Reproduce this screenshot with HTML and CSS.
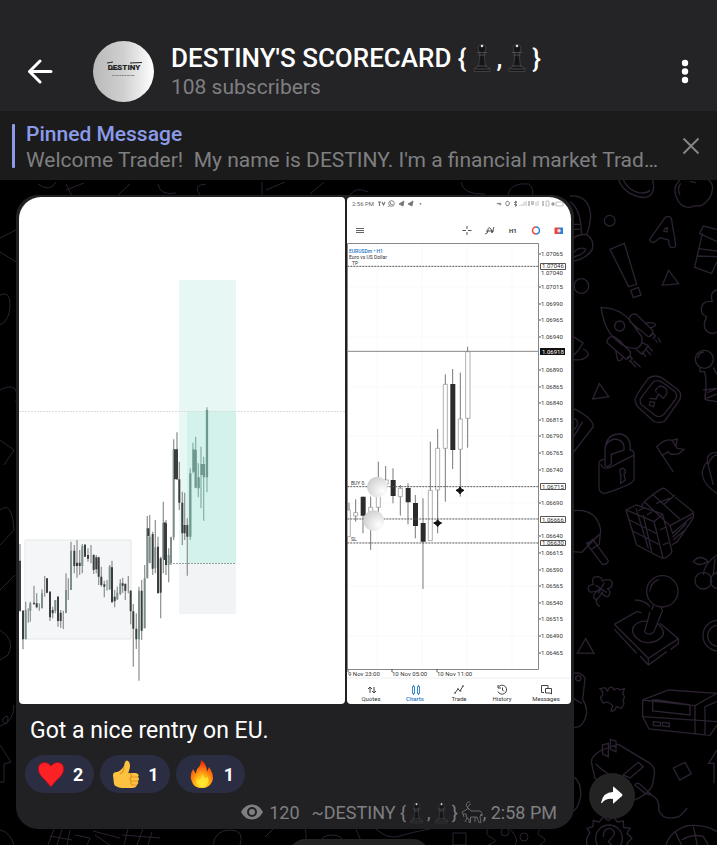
FILE: index.html
```html
<!DOCTYPE html>
<html lang="en">
<head>
    <meta charset="UTF-8">
    <meta name="viewport" content="width=device-width, initial-scale=1">
    <title>DESTINY'S SCORECARD</title>
    <link rel="stylesheet" href="styles.css">
</head>
<body>
<!-- shared icons -->
<svg class="defs" width="0" height="0" aria-hidden="true">
    <defs>
        <symbol id="pawn" viewBox="0 0 20 30">
            <path d="M7 9Q4.500 1.500 10 1.500T13 9L12 11L13.500 23L18 25.500V28.500H2V25.500L6.500 23L8 11Z" fill="#151516" stroke="#48484a" stroke-width=".8"/>
            <path d="M5 9.500H15M6.500 12H13.500M5.500 23H14.500M2.500 26H17.500" stroke="#59595b" stroke-width=".8"/>
            <circle cx="10" cy="3" r="1.300" fill="#ddd"/>
        </symbol>
        <linearGradient id="silver"><stop offset="0" stop-color="#b9b9b9"/><stop offset=".5" stop-color="#d0d0d0"/><stop offset="1" stop-color="#fff"/></linearGradient>
        <radialGradient id="ball" cx=".75" cy=".7" r=".8"><stop offset="0" stop-color="#fff"/><stop offset="1" stop-color="#cfcfcf"/></radialGradient>
        <radialGradient id="flame" cx=".5" cy=".85" r=".8"><stop offset="0" stop-color="#ffee35"/><stop offset=".4" stop-color="#ffb014"/><stop offset=".7" stop-color="#ff6a0d"/><stop offset="1" stop-color="#e52a08"/></radialGradient>
    </defs>
</svg>

<header class="topbar">
    <button class="icon-btn back" aria-label="Back">
        <svg width="26" height="26" viewBox="0 0 26 26" fill="none" stroke="#fff" stroke-width="3" stroke-linecap="round" stroke-linejoin="round"><path d="M24 12.500H2.500M13 2L2.500 12.500L13 23"/></svg>
    </button>
    <svg class="avatar" viewBox="0 0 61 61" role="img" aria-label="Channel photo">
        <circle cx="30.500" cy="30.500" r="30.500" fill="url(#silver)"/>
        <text x="31" y="29" text-anchor="middle" class="avatar-name">DESTINY</text>
        <path d="M14 22L20 21M16 28.500L26 28M37 22L49 21.500" stroke="#222" stroke-width="1"/>
        <path d="M19 34.500H42" stroke="#888" stroke-width="1" stroke-dasharray="2 .5"/>
    </svg>
    <div class="channel">
        <h1>DESTINY'S SCORECARD {<svg class="pawn"><use href="#pawn"/></svg>,<svg class="pawn"><use href="#pawn"/></svg>}</h1>
        <p>108 subscribers</p>
    </div>
    <button class="icon-btn menu" aria-label="Menu">
        <svg width="8" height="26" viewBox="0 0 8 26" fill="#fff"><circle cx="4" cy="4" r="3.200"/><circle cx="4" cy="12.500" r="3.200"/><circle cx="4" cy="21" r="3.200"/></svg>
    </button>
</header>

<section class="pinned">
    <span class="pinned-mark"></span>
    <a href="#post" class="pinned-link">
        <span class="pinned-title">Pinned Message</span>
        <span class="pinned-text">Welcome Trader!&nbsp; My name is DESTINY. I'm a financial market Trad…</span>
    </a>
    <button class="icon-btn" aria-label="Unpin">
        <svg width="18" height="18" viewBox="0 0 18 18" fill="none" stroke="#858585" stroke-width="2"><path d="M1.500 1.500L16.500 16.500M16.500 1.500L1.500 16.500"/></svg>
    </button>
</section>

<main class="chat">
    <!-- doodle wallpaper -->
    <svg class="wallpaper" viewBox="0 180 717 665" preserveAspectRatio="xMaxYMin slice" aria-hidden="true">
        <g transform="translate(570 180) scale(.3333)">
            <path d="M146 0Q155 25 180 40Q225 62 242 45Q256 30 248 0M160 0Q175 30 205 38Q230 42 240 30"/>
            <path d="M330 0Q308 20 318 48Q330 85 360 82Q375 75 392 78Q425 60 428 25Q428 8 415 0M330 45Q320 25 332 10M360 4L378 8"/>
            <circle cx="119" cy="122" r="16"/><circle cx="34" cy="318" r="22"/>
            <path d="M0 48Q60 45 62 110Q60 140 50 164Q75 180 66 210Q45 240 0 245M0 65Q35 90 34 165M0 133H30M0 148H30M50 164Q20 160 0 185M0 235Q50 220 46 207Q20 195 0 235"/>
            <path d="M286 112Q298 105 304 115L317 193Q317 204 304 203Q296 198 296 180L270 173L254 186Q240 190 239 178ZM281 153Q284 143 292 143L291 156Z"/>
            <path d="M120 208L163 190L200 313L176 320ZM182 331L205 322L213 345L190 353Z"/>
            <path d="M296 271L326 311L277 316Z"/>
            <path d="M441 148L400 138L389 160L441 185M397 160L374 262L425 280L441 245M384 206L441 213M380 228L441 230"/>
            <path d="M441 330Q418 335 427 365Q395 360 394 390Q395 405 410 410Q395 440 412 455Q430 466 441 455"/>
            <path d="M93 382Q155 385 184 427L215 470Q222 500 194 506Q155 505 120 460Q100 430 93 382Z"/><circle cx="149" cy="438" r="15"/>
            <path d="M178 415Q184 397 200 404L248 452Q250 470 235 470L180 425ZM111 482Q120 464 137 473L181 515Q184 535 168 538L111 488ZM137 512L143 540Q150 548 160 530M228 429Q250 425 257 434Q250 445 240 442M215 487L235 497L216 523L198 508M238 469L249 459L256 468L249 477M170 532L181 529L187 537L177 545M148 480L162 496M189 432L205 449M255 479L264 488M264 474L273 487M216 514L228 531M225 506L243 525M235 500L248 514M181 543L198 562M190 542L212 562"/>
            <path d="M10 470L39 489L27 508M39 507Q55 515 55 525Q38 545 10 538M27 508L10 528"/>
            <circle cx="403" cy="538" r="27"/><path d="M384 535Q385 518 402 516M390 562V575L403 575Q412 595 405 660M430 563L441 583M412 638L441 625M410 655L441 642"/>
            <path d="M88 611L116 650L68 657Z"/>
        </g>
        <g transform="translate(570 390) scale(.3333)">
            <path d="M195 30Q194 20 235 -35Q255 -48 275 -37L325 0Q340 15 325 35L285 92Q270 103 250 93L205 52Q197 45 195 30ZM210 28L250 -25Q263 -32 277 -23L315 5Q325 15 315 30L282 73Q270 85 255 76L212 42ZM238 25L258 27L265 12L280 25L291 10Q293 -10 270 -12Q250 0 260 8M240 35L254 37L250 50L238 46Z"/>
            <path d="M10 55Q70 85 70 110L10 187M10 85Q28 90 20 110L10 120M10 142L38 95"/>
            <path d="M87 222Q85 210 105 208V180Q108 130 152 132Q185 140 180 180Q194 180 192 200V270Q185 285 105 310Q86 310 87 290ZM105 225V175Q110 150 135 147Q165 150 162 180L124 193V222Q110 235 105 225ZM92 223Q100 240 120 232L190 196M150 245Q148 234 160 235Q172 245 162 252L166 270L152 280L153 256Q149 250 150 245Z"/>
            <path d="M260 170L310 246M260 170Q285 145 306 151L322 175L342 178L325 192L303 193L294 185L277 197ZM306 151L322 147L317 171"/>
            <path d="M168 360L198 345L278 372L306 485Q290 510 275 504L200 465ZM168 360L252 395L278 372M252 395L279 504M179 390L262 432M188 423L270 465M198 355L235 475M220 375L245 485M205 362L220 355M231 375L246 365M215 350Q215 335 275 296Q285 292 292 302L369 365Q374 378 366 390L322 455L305 465M223 335L300 407L369 370M250 315L330 388M280 345L315 315M258 340L300 325M300 407L308 430L365 380M308 442L350 400M310 450L345 420M270 420L290 410M278 465L296 458"/>
            <path d="M10 362Q80 355 92 420Q90 440 88 462L62 480M10 485L35 487L92 430M52 464L68 448L115 512Q112 525 97 523ZM48 460Q70 455 83 437"/>
            <path d="M91 597Q58 614 56 600Q50 585 70 583Q62 560 82 560Q95 560 97 573Q120 563 127 577Q128 593 113 596Q127 608 113 620Q100 620 96 607Q82 635 72 625Q65 612 91 597ZM76 585L110 608M103 578L85 610M81 627Q74 638 89 650"/>
            <circle cx="277" cy="604" r="47"/><path d="M240 604Q240 578 267 568M250 645L245 660M275 651V660"/>
            <circle cx="400" cy="572" r="25"/><circle cx="445" cy="572" r="24"/><path d="M400 555Q402 520 441 495M430 552L435 505M415 515Q390 490 370 515Q390 532 412 515"/>
            <path d="M441 188Q410 185 412 215Q395 235 397 255Q402 285 441 310M412 215L430 285M414 225Q425 195 441 195M400 0L441 -5M405 10L408 30L441 35"/>
        </g>
        <g transform="translate(570 610) scale(.3333)">
            <path d="M133 43L200 5L215 8M270 40L325 86V102L302 118M290 125L235 165L210 138M200 130L133 58ZM133 43L235 145L325 86M235 145V165M262 40Q290 65 275 82Q250 105 215 95Q180 75 190 50Q210 28 235 35M240 5L224 65Q235 80 252 65L278 0M240 -10Q225 -30 195 -30"/>
            <path d="M47 86L72 130L22 129Z"/><circle cx="445" cy="77" r="46"/><circle cx="445" cy="77" r="32"/>
            <path d="M10 190Q35 185 45 205L38 270Q50 285 50 310Q40 355 10 352M10 265L35 280"/><circle cx="25" cy="205" r="8"/>
            <path d="M90 236L105 233L113 243Q117 229 127 232L133 240Q143 230 149 240L163 236L158 253Q168 260 159 270L162 282L154 295L139 290Q133 307 123 303L128 287Q113 270 100 280L91 264Q107 250 90 236Z"/>
            <path d="M218 270L296 240L441 250M218 270V320L237 357L420 376L441 345M218 320L441 335M218 270L375 287L441 250M375 287V370M248 270L360 285V315L248 303ZM248 270L263 270L360 285M405 375V290L441 275M250 335L271 337V348L250 346ZM277 337L298 339V350L277 348Z"/>
            <path d="M65 460Q60 440 95 420L145 403L240 460Q260 475 250 510Q250 550 180 575Q150 565 75 505ZM77 462Q115 500 145 500Q200 555 185 560M97 405L115 400V440L98 432ZM121 388L138 393V425L121 418ZM159 495L205 457L220 470L180 504ZM195 525Q200 515 210 523L245 555L225 550ZM242 555Q270 565 266 600Q280 635 325 620Q330 620 352 594"/>
            <path d="M310 474L345 457L364 491L329 510ZM441 420L416 460H432V520"/>
            <path d="M50 685L60 668L51 655L69 650L70 632L88 636L100 620L115 632L130 620L142 636L160 633L161 652L180 655L171 670L186 685L171 700L178 715H50Z"/><circle cx="117" cy="685" r="40"/><path d="M100 680Q100 655 120 655Q142 665 128 680L115 695L125 705"/>
            <path d="M288 705Q300 665 350 648Q400 640 441 665M315 665L335 705M370 650L382 705M335 690Q370 670 400 680L415 705"/>
            <path d="M10 500Q35 515 32 560Q25 600 0 610"/>
        </g>
        <!-- strips around the bubble -->
        <path d="M38 184Q50 193 56 182M66 184L72 196M66 190L84 183M118 195L130 184M158 184Q160 196 176 193M200 195Q192 185 206 184M262 182V195M266 190L285 182M310 194L324 182M350 195Q356 186 368 192M461 182Q463 195 485 194M508 195Q510 182 529 184Q535 190 532 196"/>
        <path d="M0 238L16 230M0 252L16 262M0 295Q10 290 10 305T0 325M0 390Q20 380 16 402M0 440L14 450L4 465M0 510Q12 500 14 530L0 545M0 590L15 575M0 630Q16 640 8 655L0 660M0 726Q14 722 14 705M2 720Q9 712 8 720T2 720M0 745L11 762L4 764V782L0 782M0 830Q10 832 14 845"/>
        <path d="M54 829L48 845M62 829L57 845M70 830L67 845M50 836L72 840M75 835L90 838L87 845M93 831L120 838M95 835L110 845M128 829L124 845M143 829L137 845M152 832L148 845M122 835L160 838M213 845Q215 830 230 830T240 845M265 837L273 829M305 829Q308 838 303 845M356 829Q360 839 363 845M320 845Q320 835 332 835T344 845M376 829Q388 840 400 836T430 829M453 833H466V845H453ZM488 829Q484 835 492 838T488 845M510 829Q520 840 515 845M540 829Q535 834 542 837T540 845"/><circle cx="505" cy="832" r="4"/><circle cx="524" cy="837" r="4"/>
    </svg>

    <div class="row" id="post">
        <article class="bubble">
            <div class="album">
                <svg class="photo" viewBox="0 0 326 507" preserveAspectRatio="none" role="img" aria-label="EURUSD long position chart">
                    <rect width="326" height="507" fill="#fff"/>
                    <rect x="160" y="83" width="57" height="283" fill="#e6f7f4"/>
                    <rect x="168" y="214" width="49" height="152" fill="#d4f2ec"/>
                    <rect x="160" y="366" width="57" height="51" fill="#f2f3f5"/>
                    <path d="M6 343H112V442H6Z" fill="#f5f6f8" stroke="#e3e8e7"/>
                    <path d="M0 214.500H326" stroke="#dadedd" stroke-dasharray="2 1"/>
                    <path d="M154 366.500H217" stroke="#97a5a1" stroke-dasharray="2 1"/>
                    <g transform="translate(-4 243) scale(.3333)" fill="none">
                        <path stroke="#969998" stroke-width="4" d="M15 312V515M24 510V628M32 485V598M40 505V548M46 485V545M57 437V495M65 460V505M73 490V512M81 448V505M89 408V470M96 415V460M105 453V543M113 500V535M121 480V520M129 468V560M137 510V563M145 512V567M153 400V520M160 415V480M168 305V450M178 315V400M186 300V413M194 330V405M202 312V400M210 312V350M219 325V365M228 315V370M236 343V402M244 345V400M251 350V435M259 380V440M268 422V472M276 420V452M284 375V450M291 362V490M299 450V502M307 440V480M316 418V465M323 413V458M331 430V480M340 408V460M347 450V553M355 492V680M364 520V627M372 440V722M380 420V600M389 375V565M397 228V415M404 225V370M413 275V405M421 240V400M429 290V460M437 350V535M445 185V400M453 240V405M461 325V427M468 290V375M476 -2V300M486 -23V120M493 65V210M502 155V315M509 158V300M517 235V407"/>
                        <path stroke="#7c8f8b" stroke-width="6" d="M32 510V598M46 490V512M81 460V505M121 480V512M153 450V518M168 332V450M202 318V378M284 380V448M307 458V478M316 430V462M372 452V598M389 415V565M397 265V415M404 290V368M421 322V385M445 250V355M461 345V375M468 292V370M476 28V292"/>
                        <path stroke="#3a3e3e" stroke-width="6" d="M15 362V512M24 512V598M57 488V492M65 490V502M96 415V458M105 455V532M113 510V520M129 470V543M137 518V543M178 332V378M186 368V378M194 368V378M210 314V350M219 345V356M236 345V390M244 352V388M251 352V410M259 410V435M268 433V440M291 382V486M299 470V484M323 430V437M331 432V452M347 452V514M355 514V566M364 566V598M380 452V572M400 265V288M413 282V386M429 320V460M437 355V458M449 247V360M453 250V375M480 28V118M486 28V118M493 118V188M502 188V280M509 255V280M517 255V290"/>
                        <path stroke="#8bb5ab" stroke-width="4" d="M526 85V300M534 8V100M542 -10V145M550 70V172M558 20V205M566 50V242M576 -98V157"/>
                        <path stroke="#6f998f" stroke-width="7" d="M526 100V290M536 28V95M542 30V143M551 112V145M560 72V105M567 72V112M576 -90V112"/>
                    </g>
                </svg>
                <svg class="photo photo-mt" viewBox="0 0 224 507" preserveAspectRatio="none" role="img" aria-label="EURUSDm H1 terminal chart">
                    <rect width="224" height="507" fill="#fff"/>
                    <text x="5" y="9" class="t6 grey">2:56 PM</text>
                    <g fill="none" stroke="#777" stroke-width=".9">
                        <path d="M31 5H34M32.500 5V9M35 5L36.500 8L38 5" stroke-width="1.200"/>
                        <circle cx="44.500" cy="6.500" r="2.800"/><path d="M43 5Q43 8 46 8M42 9L41.500 10"/>
                        <path d="M52 7L57 4L56 9ZM61 7L66 4L65 9Z" fill="#777"/><path d="M73.500 6V7.500" stroke-width="1.500"/>
                        <path d="M150 7Q150 5 152 7T154 7T151 7M160 4Q157 6 160 9L162 8M160 4Q164 5 162 8M167 5L170 8L168.500 9.500V4L170 5L167 8M182 4V9M184 5H187M184 7H187M196 4V9M204 7H208M206 5V9"/>
                        <path d="M173 9V8M175 9V7M177 9V5M179 9V4M189 9V5M191 9V4M199 4H202V9H199ZM209 5H216V9H209Z" stroke="#bbb"/>
                    </g>
                    <path d="M9 31.500H17M9 33.500H17M9 35.500H17" stroke="#666"/>
                    <path d="M120 29V32M120 35V38M115.500 33.500H119M121 33.500H124.500M138 37Q141 37 141 33T144 32L145 36L147 30M139 34H147" stroke="#555" fill="none"/>
                    <text x="162" y="36" class="t6 bold">H1</text>
                    <path d="M189 30A3.500 3.500 0 0 0 189 37" stroke="#e5483d" stroke-width="1.500" fill="none"/><path d="M189 30A3.500 3.500 0 0 1 189 37" stroke="#2f80d8" stroke-width="1.500" fill="none"/>
                    <path d="M207.500 30.500H212V37H207.500Z" fill="#e5483d"/><path d="M212 30.500H216V37H212Z" fill="#2f80d8"/><circle cx="212" cy="33.700" r="1.800" fill="#ffd9d9"/>
                    <path d="M30 46V472M75 46V472M120 46V472M165 46V472M0 90H192M0 140H192M0 190H192M0 239H192M0 306H192M0 389H192M0 439H192" stroke="#f9f9f9"/>
                    <path d="M.5 472.500V46.500H191.500V472.500Z" fill="none" stroke="#888"/>
                    <text x="2" y="56" class="t5 blue">EURUSDm • H1</text>
                    <text x="2" y="62" class="t5">Euro vs US Dollar</text>
                    <text x="5" y="68" class="t5">TP</text>
                    <text x="4" y="288" class="t5">BUY 0.</text>
                    <text x="4" y="344" class="t5">SL</text>
                    <g transform="translate(-4 153) scale(.3333)">
                        <path stroke="#777" stroke-width="3" d="M18 458V480M38 448V515M60 440V550M83 440V600M106 335V510M128 348V400M150 355V460M172 405V497M195 400V523M217 435V565M240 445V717M262 275V421M284 237V550M307 73V455M329 57V357M352 68V440M374 -10V293"/>
                        <path fill="#fff" stroke="#888" stroke-width="2" d="M13 480H22V560H13ZM32 488H44V498H32ZM77 472H89V500H77ZM100 430H112V472H100ZM122 390H136V402H122ZM166 415H178V440H166ZM256 421H268V572H256ZM278 295H290V420H278ZM301 103H313V295H301ZM346 207H358V298H346ZM368 5H381V205H368Z"/>
                        <path fill="#2b2b2b" d="M53 440H68V497H53ZM143 390H158V438H143ZM188 414H203V457H188ZM210 459H225V528H210ZM233 519H248V575H233ZM322 102H337V300H322Z"/>
                        <path stroke="#555" stroke-width="3" stroke-dasharray="6 3" d="M13 410H587M13 507H587M13 -251H587M13 579H587"/>
                        <path stroke="#888" stroke-width="3" d="M13 4H587"/>
                        <circle cx="103" cy="411" r="31" fill="url(#ball)"/><circle cx="92" cy="512" r="31" fill="url(#ball)"/>
                        <path d="M351 411L355 417L363 421L355 426L351 432L347 426L339 421L347 417ZM284 509L288 515L296 519L288 524L284 530L280 524L272 519L280 515Z" fill="#111" stroke="#111" stroke-width="3"/>
                    </g>
                    <path d="M192 57H194M192 90H194M192 107H194M192 123H194M192 140H194M192 173H194M192 190H194M192 206H194M192 223H194M192 239H194M192 256H194M192 273H194M192 306H194M192 339H194M192 356H194M192 373H194M192 389H194M192 406H194M192 422H194M192 439H194M192 456H194M1 472V475M45 472V475M90 472V475" stroke="#555"/>
                    <g class="t6">
                        <text x="194" y="59">1.07065</text><text x="194" y="78">1.07040</text><text x="194" y="92">1.07015</text><text x="194" y="109">1.06990</text><text x="194" y="125">1.06965</text><text x="194" y="142">1.06940</text><text x="194" y="175">1.06890</text><text x="194" y="192">1.06865</text><text x="194" y="208">1.06840</text><text x="194" y="225">1.06815</text><text x="194" y="241">1.06790</text><text x="194" y="258">1.06765</text><text x="194" y="275">1.06740</text><text x="194" y="308">1.06690</text><text x="194" y="341">1.06640</text><text x="194" y="358">1.06615</text><text x="194" y="375">1.06590</text><text x="194" y="391">1.06565</text><text x="194" y="408">1.06540</text><text x="194" y="424">1.06515</text><text x="194" y="441">1.06490</text><text x="194" y="458">1.06465</text>
                        <path d="M193.500 66.500H218.500V72.500H193.500ZM193.500 286.500H218.500V292.500H193.500ZM193.500 319.500H218.500V325.500H193.500ZM193.500 343.500H218.500V348.500H193.500Z" fill="#fff" stroke="#555"/>
                        <path d="M193 151H218V158H193Z" fill="#111"/>
                        <text x="195" y="71">1.07046</text><text x="195" y="292">1.06715</text><text x="195" y="325">1.06666</text><text x="195" y="348">1.06630</text><text x="195" y="157" class="white">1.06918</text>
                        <text x="1" y="479">9 Nov 23:00</text><text x="45" y="479">10 Nov 05:00</text><text x="90" y="479">10 Nov 11:00</text>
                    </g>
                    <path d="M0 481H224" stroke="#eee"/>
                    <g fill="none" stroke="#444">
                        <path d="M23 496V490M21 492L23 490L25 492M27 490V496M25 494L27 496L29 494"/>
                        <path d="M65.500 489.500H67.500V496.500H65.500ZM70.500 489.500H72.500V496.500H70.500ZM66.500 488V489M66.500 497V498M71.500 488V489M71.500 497V498" stroke="#1d78c8" stroke-width=".9"/>
                        <path d="M108 496L111 492L113 494L116 489"/><path d="M108 495.500V496.500M111 491.500V492.500M113.500 493.500V494.500M116 488.500V489.500" stroke-width="2"/>
                        <path d="M151.500 490A4.500 4.500 0 1 1 151 494.500M151 488V491H154M155.500 490.500V493L157 494.500"/>
                        <path d="M201 491V488.500H194.500V495.500H197M198.500 491.500H204.500V497L203 496H198.500Z"/>
                    </g>
                    <g class="t6" text-anchor="middle">
                        <text x="24" y="504">Quotes</text><text x="68" y="504" class="blue">Charts</text><text x="112" y="504">Trade</text><text x="155" y="504">History</text><text x="199" y="504">Messages</text>
                    </g>
                </svg>
            </div>
            <p class="caption">Got a nice rentry on EU.</p>
            <div class="reactions">
                <button class="reaction" aria-label="Heart 2">
                    <svg width="28" height="28" viewBox="0 0 28 28"><path d="M14 27Q9 21 4 16Q-1 9 3 4Q9 0 14 6Q19 0 25 4Q29 9 24 16Q18 21 14 27Z" fill="#fb2225" stroke="#a8101e"/></svg>
                    <span>2</span>
                </button>
                <button class="reaction" aria-label="Thumbs up 1">
                    <svg width="28" height="28" viewBox="0 0 28 28"><path d="M1 15Q1 12 5 12Q9 11 12 6L13 2Q15-1 17 2Q19 5 17 11L16 13H24Q28 14 26 17Q28 19 26 21Q27 23 25 25Q24 28 20 28H10Q3 27 2 24Z" fill="#fdc23f"/><path d="M17 13Q20 14 19 17H26M19 17Q17 19 19 21H26M19 21Q18 23 20 25H25M12 7Q12 12 8 14" fill="none" stroke="#e49322" stroke-width="1.200"/></svg>
                    <span>1</span>
                </button>
                <button class="reaction" aria-label="Fire 1">
                    <svg width="28" height="28" viewBox="0 0 28 28"><path d="M13 0Q19 4 19 12L21 7Q27 16 24 22Q21 28 14 28Q6 28 4 22Q1 16 5 9L8 14Q8 9 11 7Q13 4 13 0Z" fill="url(#flame)"/><path d="M14 14Q16 18 18 18L20 17Q22 26 14 27Q7 26 9 18L11 20Q14 18 14 14Z" fill="#ffe62e" opacity=".8"/></svg>
                    <span>1</span>
                </button>
            </div>
            <footer class="meta">
                <svg width="22" height="16" viewBox="0 0 22 16"><path d="M0 8Q4 .5 11 .5T22 8Q18 15.500 11 15.500T0 8Z" fill="#7f7f81"/><circle cx="11" cy="8" r="5" fill="#212123"/><circle cx="11" cy="8" r="3" fill="#7f7f81"/></svg>
                <span class="views">120</span>
                <span>~DESTINY {<svg class="pawn"><use href="#pawn"/></svg>,<svg class="pawn"><use href="#pawn"/></svg>}<svg class="goat" viewBox="0 0 22 22"><path d="M5 9L1 11Q1 14 5 13L6 17L8 18V21.500H9.500V16H16L18 21.500H20L19 16L20 13L21 15V12L19 10H10L8 8Q3 4 7 1L9 1M5 9Q6 7 8 8M8 8Q5 5 10 3M6 17L4 21M14 16V21M2 13L3 16" fill="#1c1c1e" stroke="#707073" stroke-width=".9"/></svg>, 2:58 PM</span>
            </footer>
        </article>
        <button class="forward" aria-label="Forward">
            <svg width="22" height="20" viewBox="0 0 22 20"><path d="M0 17Q2 6 12 6V1Q12 0 13 1L21 8Q22 9 21 10L13 17Q12 18 12 17V13Q5 12 1 17Z" fill="#fff"/></svg>
        </button>
    </div>
    <div class="next-pill"></div>
</main>
</body>
</html>
```
FILE: styles.css
```css
:root {
    --bar: #242426;
    --pinned: #1b1b1b;
    --bubble: #212123;
    --muted: #7f7f81;
    --accent: #8b9bea;
}
* { box-sizing: border-box; }
body {
    margin: 0;
    height: 100vh;
    display: flex;
    flex-direction: column;
    overflow: hidden;
    font-family: Roboto, "Liberation Sans", sans-serif;
    background: #000;
    color: #fff;
}
h1, p { margin: 0; font-weight: 400; }
button {
    font-family: inherit;
    color: inherit;
    border: none;
    cursor: pointer;
}
.defs { position: absolute; }
.icon-btn {
    display: flex;
    padding: 0;
    background: none;
}

/* top bar */
.topbar {
    display: flex;
    align-items: center;
    height: 111px;
    padding: 32px 28px 0 27px;
    background: var(--bar);
    flex-shrink: 0;
}
.avatar {
    width: 61px;
    height: 61px;
    margin: 0 17px 0 40px;
    flex-shrink: 0;
}
.avatar-name {
    font-size: 8px;
    font-weight: 900;
    fill: #222;
}
.channel {
    flex: 1;
    min-width: 0;
    white-space: nowrap;
}
.channel h1 {
    font-size: 26px;
    line-height: 30px;
    font-weight: 500;
}
.channel p {
    font-size: 21px;
    line-height: 28px;
    color: var(--muted);
}
.channel .pawn {
    width: 20px;
    height: 30px;
    margin: 0 5px;
    vertical-align: -6px;
}

/* pinned message */
.pinned {
    display: flex;
    align-items: center;
    height: 69px;
    padding: 0 17px 0 12px;
    background: var(--pinned);
    flex-shrink: 0;
}
.pinned-mark {
    width: 3px;
    height: 44px;
    border-radius: 1px;
    background: var(--accent);
}
.pinned-link {
    flex: 1;
    min-width: 0;
    margin-right: 20px;
    padding: 2px 0 0 11px;
    text-decoration: none;
}
.pinned-link span {
    display: block;
    font-size: 21px;
    line-height: 26px;
}
.pinned-title {
    font-weight: 500;
    color: var(--accent);
}
.pinned-text {
    color: var(--muted);
    white-space: nowrap;
    overflow: hidden;
    text-overflow: ellipsis;
}

/* chat */
.chat {
    position: relative;
    flex: 1;
    min-height: 0;
    padding: 15px 16px 0;
    overflow: hidden;
}
.wallpaper {
    position: absolute;
    top: 0;
    left: 0;
    width: 100%;
    height: 100%;
    fill: none;
    stroke: #2c2232;
}
.wallpaper g { stroke-width: 4; }
.row {
    position: relative;
    display: flex;
    align-items: flex-end;
    gap: 15px;
    padding-right: 66px;
}
.bubble {
    flex: 1;
    min-width: 0;
    padding: 2px 3px 3px;
    background: var(--bubble);
    border-radius: 22px;
}
.album {
    display: grid;
    grid-template-columns: 326fr 224fr;
    gap: 2px;
}
.photo {
    display: block;
    width: 100%;
    height: 100%;
    border-radius: 22px 4px 4px 4px;
}
.photo-mt { border-radius: 4px 22px 4px 4px; }
.t5, .t6 { fill: #333; }
.t5 { font-size: 5px; }
.t6 { font-size: 6px; }
.bold { font-weight: 700; }
.grey { fill: #666; }
.blue { fill: #1d78c8; font-weight: 500; }
.white { fill: #fff; }
.caption {
    padding: 12px 11px 10px;
    font-size: 23px;
    line-height: 29px;
}
.reactions {
    display: flex;
    gap: 6px;
    padding-left: 6px;
}
.reaction {
    display: flex;
    align-items: center;
    gap: 8px;
    height: 38px;
    padding: 0 11px 0 12px;
    border-radius: 19px;
    background: #2b2d42;
    font-size: 18px;
    font-weight: 700;
}
.meta {
    display: flex;
    align-items: center;
    justify-content: flex-end;
    height: 28px;
    margin-top: 5px;
    padding-right: 14px;
    font-size: 18px;
    color: var(--muted);
    white-space: nowrap;
}
.views { margin: 0 12px 0 6px; }
.meta .pawn {
    width: 15px;
    height: 22px;
    margin: 0 3px;
    vertical-align: -5px;
}
.goat {
    width: 22px;
    height: 22px;
    margin-left: 3px;
    vertical-align: -4px;
}
.forward {
    display: flex;
    align-items: center;
    justify-content: center;
    flex-shrink: 0;
    width: 46px;
    height: 46px;
    margin-bottom: 10px;
    padding: 0;
    border-radius: 50%;
    background: #232324;
}
.next-pill {
    position: relative;
    width: 140px;
    height: 32px;
    margin: 10px auto 0;
    border-radius: 16px;
    background: #232324;
}
```
